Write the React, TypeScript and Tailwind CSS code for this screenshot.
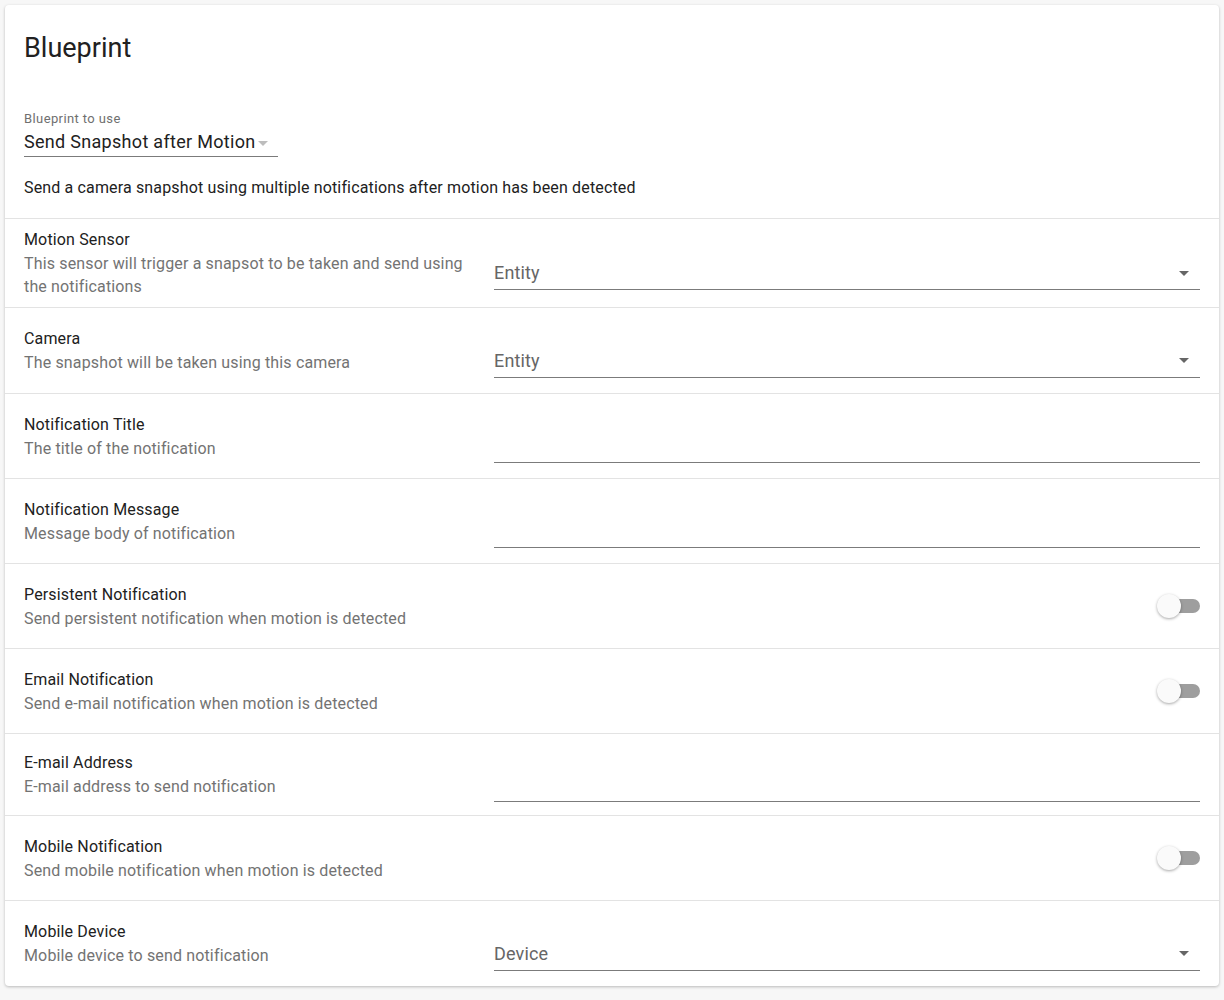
import type { ReactNode } from 'react'

type Field = 'entity' | 'device' | 'text' | 'toggle'

type Row = {
  title: string
  desc: string
  field: Field
  height: string
}

const rows: Row[] = [
  {
    title: 'Motion Sensor',
    desc: 'This sensor will trigger a snapsot to be taken and send using the notifications',
    field: 'entity',
    height: 'h-[89px]',
  },
  { title: 'Camera', desc: 'The snapshot will be taken using this camera', field: 'entity', height: 'h-[86px]' },
  { title: 'Notification Title', desc: 'The title of the notification', field: 'text', height: 'h-[85px]' },
  { title: 'Notification Message', desc: 'Message body of notification', field: 'text', height: 'h-[85px]' },
  {
    title: 'Persistent Notification',
    desc: 'Send persistent notification when motion is detected',
    field: 'toggle',
    height: 'h-[85px]',
  },
  {
    title: 'Email Notification',
    desc: 'Send e-mail notification when motion is detected',
    field: 'toggle',
    height: 'h-[85px]',
  },
  { title: 'E-mail Address', desc: 'E-mail address to send notification', field: 'text', height: 'h-[82px]' },
  {
    title: 'Mobile Notification',
    desc: 'Send mobile notification when motion is detected',
    field: 'toggle',
    height: 'h-[85px]',
  },
  { title: 'Mobile Device', desc: 'Mobile device to send notification', field: 'device', height: 'h-[86px]' },
]

const Caret = ({ className }: { className: string }) => (
  <svg width="10" height="5" viewBox="0 0 10 5" className={className}>
    <path d="M0 0 L10 0 L5 5 Z" fill="currentColor" />
  </svg>
)

const SelectField = ({ label }: { label: string }) => (
  <div className="h-[56px] w-full flex items-end border-b border-[#7b7b7b] mb-[2px]">
    <div className="flex w-full items-center justify-between pb-[4px] pr-[11px]">
      <span className="text-[18px] leading-6 tracking-[0.15px] text-[#666666]">{label}</span>
      <Caret className="text-[#666666]" />
    </div>
  </div>
)

const TextField = () => <div className="h-[56px] w-full border-b border-[#7b7b7b] mb-[2px]" />

const Toggle = () => (
  <div className="w-full flex justify-end">
    <div className="relative w-[43px] h-[24px] flex items-center justify-end">
      <div className="w-[37px] h-[14px] rounded-full bg-[#9e9e9e]" />
      <div className="absolute left-0 top-0 w-[24px] h-[24px] rounded-full bg-[#fafafa] shadow-[0_1px_3px_rgba(0,0,0,0.35)]" />
    </div>
  </div>
)

const SettingsRow = ({ row }: { row: Row }) => {
  let control: ReactNode = null
  if (row.field === 'entity') control = <SelectField label="Entity" />
  else if (row.field === 'device') control = <SelectField label="Device" />
  else if (row.field === 'text') control = <TextField />
  else control = <Toggle />

  return (
    <div className={`flex items-center gap-[24px] border-t border-[#e3e3e3] pl-[19px] pr-[19px] ${row.height}`}>
      <div className="w-[446px] shrink-0 tracking-[0.15px]">
        <div className="text-[16px] leading-6 text-[#212121]">{row.title}</div>
        <div className="text-[16px] leading-[23px] text-[#737373]">{row.desc}</div>
      </div>
      <div className="flex-1">{control}</div>
    </div>
  )
}

export default function App() {
  return (
    <div className="min-h-[1000px] bg-[#f7f7f7] p-[5px]" style={{ fontFamily: 'Roboto, "Liberation Sans", sans-serif' }}>
      <div className="bg-white rounded-[4px] shadow-[0_1px_3px_rgba(0,0,0,0.25)] overflow-hidden">
        <div className="px-[19px] pt-[27px] pb-[18px]">
          <h1 className="text-[27px] leading-8 text-[#212121]">Blueprint</h1>
          <div className="mt-[47px] w-[254px] border-b border-[#7b7b7b] pb-[2px]">
            <div className="text-[13px] leading-4 tracking-[0.4px] text-[#6f6f6f]">Blueprint to use</div>
            <div className="mt-[3px] flex items-center gap-[3px]">
              <span className="text-[18px] leading-6 tracking-[0.3px] text-[#212121]">Send Snapshot after Motion</span>
              <Caret className="mt-[2px] text-[#bdbdbd]" />
            </div>
          </div>
          <p className="mt-[19px] text-[16px] leading-6 tracking-[0.15px] text-[#212121]">
            Send a camera snapshot using multiple notifications after motion has been detected
          </p>
        </div>
        {rows.map((row) => (
          <SettingsRow key={row.title} row={row} />
        ))}
      </div>
    </div>
  )
}
